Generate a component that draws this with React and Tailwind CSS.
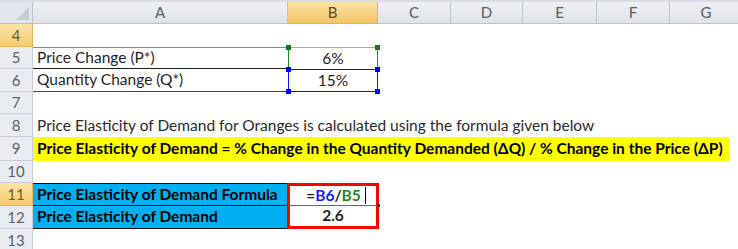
import React from "react";

// columns of the sheet (row-header column is 33px)
const cols = [
  { l: "A", w: "w-[255px]" },
  { l: "B", w: "w-[90px]", active: true },
  { l: "C", w: "w-[73px]" },
  { l: "D", w: "w-[72px]" },
  { l: "E", w: "w-[74px]" },
  { l: "F", w: "w-[73px]" },
  { l: "G", w: "w-[73px]" },
];

function RowHead({ n, active }) {
  return (
    <div
      className={`w-[33px] shrink-0 flex items-center justify-center border-r border-b text-[15px] ${
        active
          ? "bg-gradient-to-b from-[#fbe3a6] to-[#f5cc6e] border-[#e2b559] text-[#6b5a2e]"
          : "bg-[#e9ecf0] border-[#c9ced6] text-[#5a5f66]"
      }`}
    >
      {n}
    </div>
  );
}

function Row({ n, h, active, children }) {
  return (
    <div className={`flex ${h}`}>
      <RowHead n={n} active={active} />
      {children}
    </div>
  );
}

function Handle({ pos, color }) {
  return <div className={`absolute w-[5px] h-[5px] ${color} ${pos}`} />;
}

export default function App() {
  return (
    <div className="w-[738px] h-[249px] overflow-hidden bg-white font-['Lato',sans-serif] text-[#1f1f1f]">
      {/* column headers */}
      <div className="flex h-[24px] border-t-2 border-[#d9dde3]">
        <div className="w-[33px] shrink-0 relative bg-[#e3e7ec] border-r border-b border-[#b9c0c9]">
          <div className="absolute right-[3px] bottom-[3px] w-0 h-0 border-l-[13px] border-l-transparent border-b-[13px] border-b-[#c7ccd3]" />
        </div>
        {cols.map((c) => (
          <div
            key={c.l}
            className={`${c.w} shrink-0 flex items-center justify-center border-r border-b text-[15px] ${
              c.active
                ? "bg-gradient-to-b from-[#fbe3a6] to-[#f3c463] border-[#e0b256] text-[#5c4a1f]"
                : "bg-gradient-to-b from-[#eef0f3] to-[#dfe3e8] border-[#bcc3cc] text-[#555b63]"
            }`}
          >
            {c.l}
          </div>
        ))}
      </div>

      <Row n="4" h="h-[23px]" active />

      <Row n="5" h="h-[22px]">
        <div className="w-[255px] shrink-0 flex items-center pl-[4px] text-[15.5px] border-t border-t-[#8a8a8a] border-b border-b-[#222]">
          Price Change (P*)
        </div>
        <div className="w-[90px] shrink-0 relative flex items-center justify-center text-[15.5px] border-t border-t-[#7fc47f] border-x border-x-[#1f8a1f]">
          6%
          <Handle pos="-left-[3px] -top-[3px]" color="bg-[#0f7a0f]" />
          <Handle pos="-right-[3px] -top-[3px]" color="bg-[#0f7a0f]" />
        </div>
      </Row>

      <Row n="6" h="h-[23px]">
        <div className="w-[255px] shrink-0 flex items-center pl-[4px] text-[15.5px] border-b border-b-[#444]">
          Quantity Change (Q*)
        </div>
        <div className="w-[90px] shrink-0 relative flex items-center justify-center text-[15.5px] border border-[#1010ff]">
          15%
          <Handle pos="-left-[3px] -top-[3px]" color="bg-[#0000ff]" />
          <Handle pos="-right-[3px] -top-[3px]" color="bg-[#0000ff]" />
          <Handle pos="-left-[3px] -bottom-[3px]" color="bg-[#0000ff]" />
          <Handle pos="-right-[3px] -bottom-[3px]" color="bg-[#0000ff]" />
        </div>
      </Row>

      <Row n="7" h="h-[22px]" />

      <Row n="8" h="h-[23px]">
        <div className="flex-1 flex items-center pl-[4px] text-[15.5px] text-[#2a2a2a] whitespace-nowrap">
          Price Elasticity of Demand for Oranges is calculated using the formula given below
        </div>
      </Row>

      <Row n="9" h="h-[24px]">
        <div className="w-[697px] shrink-0 flex items-center pl-[4px] bg-[#ffff00] text-[15.5px] font-bold text-black whitespace-nowrap">
          Price Elasticity of Demand = % Change in the Quantity Demanded (ΔQ) / % Change in the Price (ΔP)
        </div>
      </Row>

      <Row n="10" h="h-[22px]" />

      <Row n="11" h="h-[23px]" active>
        <div className="w-[255px] shrink-0 flex items-center pl-[4px] bg-[#00b0f0] text-[15.5px] font-bold text-black border-t border-b border-[#111]">
          Price Elasticity of Demand Formula
        </div>
        <div className="w-[92px] -ml-px shrink-0 relative flex items-center justify-center text-[15.5px] font-bold border-t-[3px] border-x-[3px] border-[#ff0000] border-b border-b-[#666]">
          <span className="ml-[6px]">
            =<span className="text-[#1a1aff]">B6</span>/<span className="text-[#1e8a1e]">B5</span>
          </span>
          <span className="ml-[4px] w-px h-[17px] bg-black" />
          <div className="absolute -right-[4px] -bottom-[2px] w-[3px] h-[3px] bg-[#333]" />
        </div>
      </Row>

      <Row n="12" h="h-[23px]">
        <div className="w-[255px] shrink-0 flex items-center pl-[4px] bg-[#00b0f0] text-[15.5px] font-bold text-black border-b border-[#111]">
          Price Elasticity of Demand
        </div>
        <div className="w-[92px] -ml-px shrink-0 flex items-center justify-center text-[15.5px] font-bold border-b-[3px] border-x-[3px] border-[#ff0000]">
          2.6
        </div>
      </Row>

      <Row n="13" h="h-[23px]" />
    </div>
  );
}
